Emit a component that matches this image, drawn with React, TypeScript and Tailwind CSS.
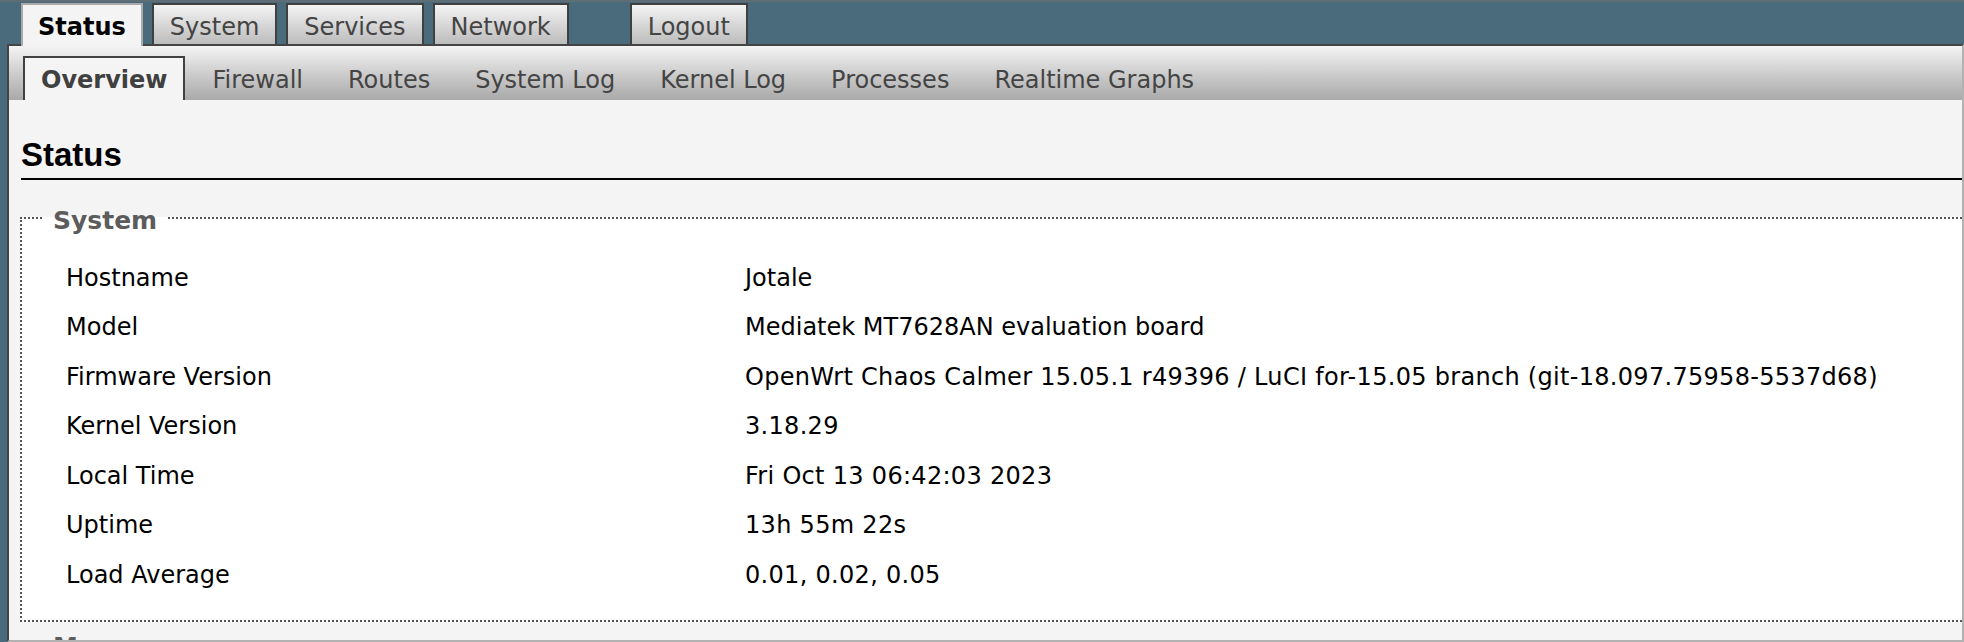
const topTabs = ['Status', 'System', 'Services', 'Network'];
const subTabs = ['Overview', 'Firewall', 'Routes', 'System Log', 'Kernel Log', 'Processes', 'Realtime Graphs'];

// [label, value, digits-heavy]
const systemInfo: [string, string, boolean][] = [
  ['Hostname', 'Jotale', false],
  ['Model', 'Mediatek MT7628AN evaluation board', false],
  ['Firmware Version', 'OpenWrt Chaos Calmer 15.05.1 r49396 / LuCI for-15.05 branch (git-18.097.75958-5537d68)', true],
  ['Kernel Version', '3.18.29', true],
  ['Local Time', 'Fri Oct 13 06:42:03 2023', true],
  ['Uptime', '13h 55m 22s', true],
  ['Load Average', '0.01, 0.02, 0.05', true],
];

function TopTab({ label, active }: { label: string; active?: boolean }) {
  if (active) {
    return (
      <div className="relative z-10 -mb-[2px] border-2 border-b-0 border-[#aaaaaa] bg-[#f4f4f4] px-[15px] pt-[8px] pb-[5px] font-bold text-black">
        {label}
      </div>
    );
  }
  return (
    <div className="border-2 border-b-0 border-[#404040] bg-linear-to-b from-[#f4f4f4] to-[#bcbcbc] px-[16px] pt-[8px] pb-[3px] text-[#444]">
      {label}
    </div>
  );
}

export default function App() {
  return (
    <div className="w-[1964px] h-[642px] overflow-hidden bg-[#4a6b7c] font-['DejaVu_Sans',Verdana,sans-serif] text-[24px] leading-[28px]">
      <div className="h-[2px] bg-[#5d6e77]" />

      {/* main menu */}
      <div className="flex h-[42px] items-end gap-[9px] pl-[21px]">
        {topTabs.map((t, i) => (
          <TopTab key={t} label={t} active={i === 0} />
        ))}
        <div className="ml-[52px]">
          <TopTab label="Logout" />
        </div>
      </div>

      <div className="ml-[7px] h-[598px] overflow-hidden border-2 border-[#444] border-r-[#b2b2b2] border-b-[#b2b2b2] bg-[#f4f4f4]">
        {/* sub menu */}
        <div className="flex h-[54px] items-end gap-[9px] bg-linear-to-b from-[#f4f4f4] to-[#a9a9a9] pl-[14px]">
          {subTabs.map((t, i) => (
            <div
              key={t}
              className={`border-2 border-b-0 px-4 pt-[8px] pb-[6px] ${
                i === 0 ? 'border-[#404040] bg-[#f4f4f4] font-bold text-[#404040]' : 'border-transparent text-[#444]'
              }`}
            >
              {t}
            </div>
          ))}
        </div>

        <h2 className="ml-[12px] mt-[36px] border-b-2 border-black pb-[4px] font-['Liberation_Sans',Arial,sans-serif] text-[33px] font-bold leading-[38px] text-black">
          Status
        </h2>

        <fieldset className="ml-[11px] mt-[19px] border-2 border-r-0 border-dotted border-[#555] bg-white pt-[17px] pb-[20px]">
          <legend className="ml-[22px] px-[9px] pt-[7px] text-[25px] font-bold leading-[30px] text-[#5c5c5c]">
            System
          </legend>
          <div className="pl-[44px] text-black">
            {systemInfo.map(([k, v, digits]) => (
              <div key={k} className="flex h-[49.5px] items-center">
                <div className="w-[679px] shrink-0">{k}</div>
                <div className={`whitespace-nowrap ${digits ? 'tracking-[0.3px]' : ''}`}>{v}</div>
              </div>
            ))}
          </div>
        </fieldset>

        <fieldset className="ml-[11px] mt-[3px] border-2 border-r-0 border-dotted border-[#555] bg-white pt-[17px] pb-[20px]">
          <legend className="ml-[22px] px-[9px] pt-[7px] text-[25px] font-bold leading-[30px] text-[#5c5c5c]">
            Memory
          </legend>
          <div className="h-[100px]" />
        </fieldset>
      </div>
    </div>
  );
}
